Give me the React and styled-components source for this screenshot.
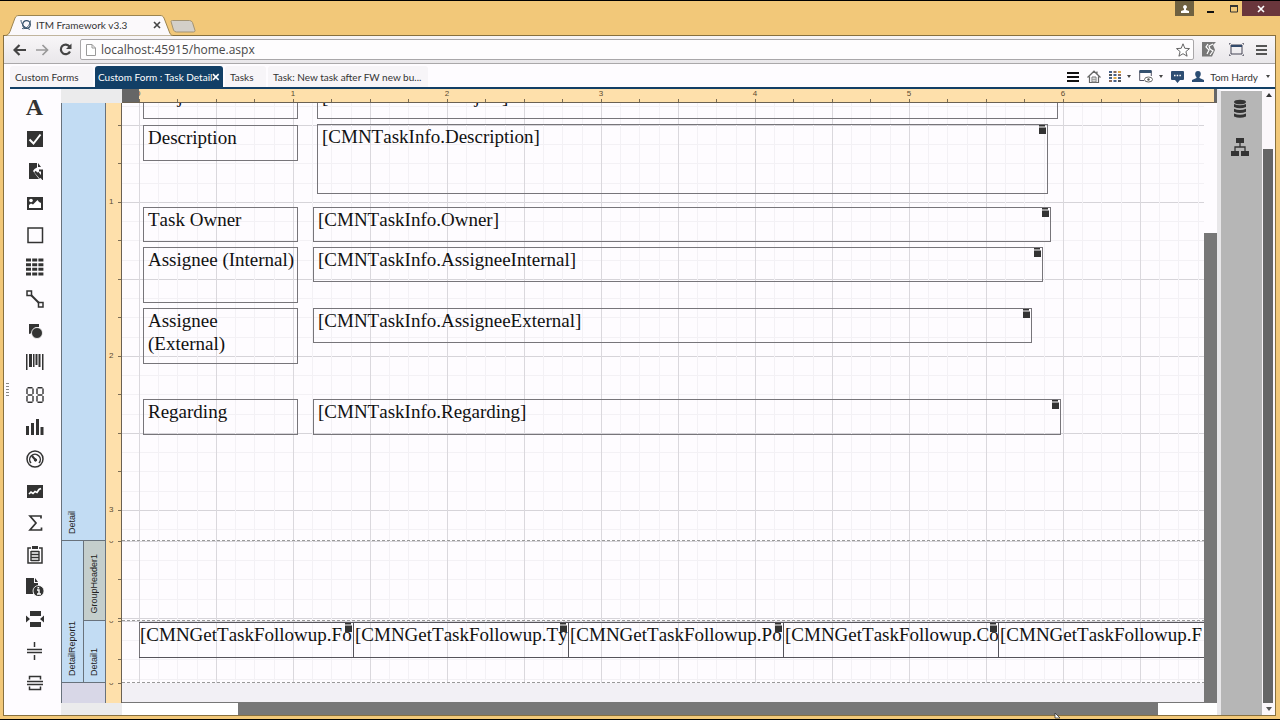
import React from 'react';
import styled, { createGlobalStyle, css } from 'styled-components';

const GlobalStyle = createGlobalStyle`
  * {
    box-sizing: border-box;
  }

  body {
    margin: 0;
    font-family: Lato, "Open Sans", sans-serif;
    color: #333;
  }

  button {
    border: 0;
    padding: 0;
    background: none;
    font: inherit;
    color: inherit;
    cursor: pointer;
  }
`;

const Desktop = styled.div`
  position: relative;
  display: flex;
  flex-direction: column;
  height: 100vh;
  min-height: 600px;
  overflow: hidden;
  background: #f2c879;
  border-top: 1px solid #000;
  border-bottom: 1px solid #000;
`;

/* ---------- browser window ---------- */

const TitleBar = styled.header`
  display: flex;
  flex: none;
  justify-content: space-between;
  height: 34px;
  padding-left: 5px;
`;

const TabStrip = styled.div`
  display: flex;
  align-items: flex-end;
`;

const BrowserTab = styled.div`
  position: relative;
  display: flex;
  align-items: center;
  width: 168px;
  height: 20px;
  padding: 0 12px 0 15px;
  gap: 4px;
  font-size: 10px;
`;

const TabShape = styled.svg`
  position: absolute;
  left: 0;
  top: 0;
`;

const TabLogo = styled.svg`
  position: relative;
  flex: none;
`;

const TabTitle = styled.span`
  position: relative;
  flex: 1;
  white-space: nowrap;
`;

const TabClose = styled.button`
  position: relative;
  display: flex;
`;

const NewTab = styled.button`
  display: flex;
  margin-left: -3px;
  margin-bottom: 2px;
`;

const WindowButtons = styled.div`
  display: flex;
  align-items: flex-start;
`;

const WindowButton = styled.button`
  display: flex;
  align-items: center;
  justify-content: center;
  width: ${(props) => props.$width}px;
  height: 15px;
  background: ${(props) => props.$bg || 'transparent'};
`;

const Page = styled.div`
  display: flex;
  flex: 1;
  flex-direction: column;
  min-height: 0;
  margin: 0 4px 3px 3px;
  border: 1px solid #87703f;
  background: #fefcff;
`;

const AddressRow = styled.div`
  display: flex;
  flex: none;
  align-items: center;
  height: 28px;
  padding: 0 8px 0 4px;
  background: linear-gradient(#f8f6f8, #e9e7ea);
  border-bottom: 1px solid #aaa8aa;
`;

const NavButton = styled.button`
  display: flex;
  justify-content: center;
  width: 23px;
`;

const AddressBox = styled.label`
  display: flex;
  flex: 1;
  align-items: center;
  height: 21px;
  margin-left: 3px;
  padding: 0 3px 0 5px;
  gap: 5px;
  background: #fefdfe;
  border: 1px solid #a9a7a9;
  border-radius: 2px;
`;

const AddressInput = styled.input`
  flex: 1;
  min-width: 0;
  border: 0;
  padding: 0;
  outline: 0;
  background: transparent;
  font-family: "Open Sans", "Noto Sans", sans-serif;
  font-size: 12px;
  color: #484848;
`;

const Extensions = styled.div`
  display: flex;
  align-items: center;
  gap: 12px;
  padding-left: 8px;
`;

/* ---------- application bar ---------- */

const AppBar = styled.div`
  display: flex;
  flex: none;
  align-items: flex-end;
  justify-content: space-between;
  height: 25px;
  margin-left: 6px;
  border-bottom: 2px solid #123f66;
`;

const AppTabs = styled.nav`
  display: flex;
  gap: 2px;
`;

const AppTab = styled.a`
  display: flex;
  align-items: center;
  width: ${(props) => props.$width}px;
  height: 21px;
  padding: 0 3px 0 5px;
  border-radius: 3px 3px 0 0;
  background: #f7f5f8;
  font-size: 10px;
  color: #333;
  text-decoration: none;
  white-space: nowrap;

  ${(props) => props.$active && css`
    justify-content: space-between;
    padding-left: 3px;
    background: #123f66;
    color: #fff;
  `}
`;

const AppTools = styled.div`
  display: flex;
  align-items: center;
  height: 21px;
  padding-right: 5px;
  gap: 8px;
  font-size: 10px;
`;

const AppTool = styled.button`
  display: flex;
  align-items: center;
  gap: 6px;
`;

const Caret = styled.span`
  border: 2px solid transparent;
  border-top: 3px solid #444;
  border-bottom: 0;
  margin-left: ${(props) => (props.$far ? 2 : 0)}px;
`;

const Workspace = styled.main`
  display: flex;
  flex: 1;
  min-height: 0;
`;

const Splitter = styled.div`
  display: flex;
  align-items: center;
  justify-content: center;
  width: 6px;
  padding-bottom: 26px;
`;

const Grip = styled.div`
  width: 3px;
  height: 13px;
  background: repeating-linear-gradient(#888 0 1px, transparent 1px 3px);
`;

const Toolbox = styled.nav`
  display: flex;
  flex-direction: column;
  width: 51px;
  padding-top: 2px;
  padding-right: 2px;
  overflow: hidden;
`;

const ToolButton = styled.button`
  display: flex;
  flex: none;
  align-items: center;
  justify-content: center;
  height: 32px;
`;

const ToolLetter = styled.span`
  font-family: "Liberation Serif", serif;
  font-size: 24px;
  font-weight: bold;
  line-height: 24px;
  color: #333;
`;

/* ---------- report designer ---------- */

const Designer = styled.section`
  display: grid;
  flex: 1;
  grid-template-columns: 45px 16px minmax(0, 1fr) 13px;
  grid-template-rows: 14px minmax(0, 1fr) 12px;
  min-width: 0;
  overflow: hidden;
`;

const Corner = styled.div`
  grid-column: 1 / 3;
  background: #ebebec;
`;

const rulerText = css`
  font-family: "Liberation Sans", sans-serif;
  font-size: 8px;
  line-height: 8px;
  color: #5a4a30;
`;

const TopRuler = styled.div`
  display: flex;
  grid-column: 3 / 5;
  overflow: hidden;
  border-bottom: 1px solid #6b6152;
  border-right: 3px solid #666;
  background:
    linear-gradient(90deg, #7a6c54 1px, transparent 1px 38px, #7a6c54 38px 39px, transparent 39px)
    17px 100% / 77px 3px repeat-x,
    #fee0ab;
`;

const RulerMargin = styled.div`
  flex: none;
  width: 17px;
  background: #666;
`;

const RulerZero = styled.div`
  ${rulerText}
  flex: none;
  width: 77px;
  padding-top: 1px;
  overflow: hidden;
  text-indent: -3px;
`;

const RulerInch = styled.div`
  ${rulerText}
  flex: none;
  width: 154px;
  padding-top: 1px;
  text-align: center;
`;

const BandTree = styled.div`
  display: flex;
  flex-direction: column;
  overflow: hidden;
  border: solid #68727c;
  border-width: 0 1px;
`;

const BandLabel = styled.div`
  display: flex;
  flex: none;
  align-items: flex-end;
  width: ${(props) => (props.$half ? '21px' : 'auto')};
  height: ${(props) => props.$height}px;
  padding: 0 0 6px 4px;
  background: ${(props) => props.$bg || '#c2dcf3'};
  border-bottom: 1px solid #68727c;
`;

const BandName = styled.span`
  writing-mode: vertical-rl;
  transform: rotate(180deg);
  font-family: "Liberation Sans", sans-serif;
  font-size: 9px;
  line-height: 12px;
  color: #222;
`;

const ReportBands = styled.div`
  display: flex;
  flex: none;
`;

const SubBands = styled.div`
  flex: 1;
  border-left: 1px solid #68727c;
`;

const BandRest = styled.div`
  flex: 1;
  background: #d8d7e7;
`;

const SideRuler = styled.div`
  display: flex;
  flex-direction: column;
  overflow: hidden;
  background: #fee0ab;
  border-right: 1px solid #6b6152;
`;

const sideTicks = 'linear-gradient(#7a6c54 1px, transparent 1px 38px, #7a6c54 38px 39px, transparent 39px)';

const SideRulerBand = styled.div`
  ${rulerText}
  flex: none;
  height: ${(props) => props.$height}px;
  padding-top: ${(props) => props.$offset || 0}px;
  overflow: hidden;
  background: ${sideTicks} 100% ${(props) => props.$offset || 0}px / 3px 77px repeat-y;
`;

const SideInch = styled.div`
  display: flex;
  align-items: center;
  height: 154px;
  padding-left: 3px;
`;

const SideZero = styled.div`
  margin-top: -4px;
  padding-left: 3px;
`;

const Canvas = styled.div`
  display: flex;
  flex-direction: column;
  overflow: hidden;
  border-bottom: 1px solid #777;
  background: #f2f0f5;
`;

const line = (dir, major, minor) => `linear-gradient(${dir},
  ${major} 1px, transparent 1px 19px,
  ${minor} 19px 20px, transparent 20px 38px,
  ${minor} 38px 39px, transparent 39px 58px,
  ${minor} 58px 59px, transparent 59px)`;

const Band = styled.div`
  position: relative;
  flex: none;
  height: ${(props) => props.$height}px;
  overflow: hidden;
  background:
    ${line('90deg', '#dad8dd', '#f3f1f5')} 17px 0 / 77px 77px,
    ${line('180deg', '#d6d4d9', '#f3f1f5')} 0 ${(props) => props.$offset || 0}px / 77px 77px,
    #fefcff;

  &::after {
    content: "";
    position: absolute;
    left: 0;
    right: 0;
    bottom: 0;
    height: 1px;
    background: repeating-linear-gradient(90deg, #999 0 3px, transparent 3px 5px);
  }
`;

const controlText = css`
  font-family: "Liberation Serif", serif;
  font-size: 19px;
  font-kerning: none;
  line-height: 23px;
  color: #111;
`;

const Control = styled.div`
  ${controlText}
  position: absolute;
  left: ${(props) => props.$x}px;
  top: ${(props) => props.$y}px;
  width: ${(props) => props.$w}px;
  height: ${(props) => props.$h}px;
  padding-left: 4px;
  overflow: hidden;
  border: 1px solid #77757a;
`;

const FollowupRow = styled.div`
  display: flex;
  margin: 1px 0 0 17px;
`;

const FollowupCell = styled.div`
  ${controlText}
  position: relative;
  flex: none;
  width: 215px;
  height: 36px;
  padding-left: 1px;
  overflow: hidden;
  border: solid #55535a;
  border-width: 1px 1px 1px 0;
  white-space: nowrap;

  &:first-child {
    box-shadow: inset 1px 0 #77757a;
  }
`;

const Badge = styled.svg`
  position: absolute;
  top: 0;
  right: 1px;
`;

const VerticalTrack = styled.div`
  display: flex;
  flex-direction: column;
  padding-top: 130px;
  background: #fefcff;
`;

const Thumb = styled.div`
  flex: 1;
  background: #777;
`;

const HorizontalTrack = styled.div`
  display: flex;
  grid-column: 3 / 5;
  padding: 0 59px 0 116px;
  background: #fff;
`;

const SidePanel = styled.aside`
  display: flex;
  flex-direction: column;
  align-items: center;
  width: 45px;
  padding-top: 8px;
  padding-right: 3px;
  gap: 18px;
  background: #b6b6b6;
  border-left: 4px solid #e8e7e9;
  border-top: 2px solid #fefcff;
`;

const PageScroll = styled.div`
  display: flex;
  flex-direction: column;
  align-items: stretch;
  width: 13px;
  background: #fbf7fa;
`;

const ScrollArrow = styled.button`
  display: flex;
  flex: none;
  align-items: center;
  justify-content: center;
  height: 12px;
`;

const PageThumb = styled.div`
  flex: 1;
  width: 10px;
  margin: 48px 0 0 1px;
  background: #666;
`;

const Pointer = styled.svg`
  position: absolute;
  right: 218px;
  bottom: 0;
`;

const INK = '#333';

const toolIcons = [
  {
    name: 'Check Box',
    art: (
      <>
        <rect x="1" y="1" width="16" height="16" fill={INK} />
        <path d="M3.5 9.5l4 4 7-9" fill="none" stroke="#fff" strokeWidth="2" />
      </>
    ),
  },
  {
    name: 'Rich Text',
    art: (
      <>
        <path d="M3 1h8v4.500L8.500 7 7 9l6 8H3z" fill={INK} />
        <path d="M12 1l3 4h-3z" fill={INK} />
        <path d="M13 8.500h3V16l-4.500-5.500M9 9.500l5.500 6.500" stroke={INK} strokeWidth="2" fill="none" />
      </>
    ),
  },
  {
    name: 'Picture Box',
    art: (
      <>
        <rect x="1" y="3" width="16" height="13" fill={INK} />
        <circle cx="5" cy="6.500" r="1.800" fill="#fff" />
        <path d="M3 14v-3l2-1.500 2 1L11.500 6 13 8l2 1v5z" fill="#fff" />
      </>
    ),
  },
  {
    name: 'Panel',
    art: <rect x="2" y="2" width="14.500" height="14.500" fill="none" stroke={INK} strokeWidth="1.500" />,
  },
  {
    name: 'Table',
    art: (
      <path
        d="M0 2h17.500M0 6.700h17.500M0 11.300h17.500M0 16h17.500"
        stroke={INK}
        strokeWidth="3"
        strokeDasharray="5 1.200"
      />
    ),
  },
  {
    name: 'Line',
    art: (
      <g fill="none" stroke={INK} strokeWidth="1.500">
        <rect x="1" y="1" width="4.500" height="4.500" />
        <rect x="12.500" y="12.500" width="4.500" height="4.500" />
        <path d="M5 5l8 8" strokeWidth="2" />
      </g>
    ),
  },
  {
    name: 'Shape',
    art: (
      <>
        <path d="M3 2h10v3a6 6 0 0 0-7 6l-3 1z" fill={INK} />
        <circle cx="11" cy="11" r="5.500" fill={INK} stroke="#fff" strokeWidth=".8" />
      </>
    ),
  },
  {
    name: 'Bar Code',
    art: (
      <g fill={INK}>
        <path d="M0 0h1.500v16H0zM3 0h3v13H3zM7 0h1.500v13H7zM9.500 0h2v11h-2zM12.500 0h2v13h-2zM16 0h1.500v16H16z" />
      </g>
    ),
  },
  {
    name: 'Zip Code',
    art: (
      <g fill="none" stroke={INK} strokeWidth="1.400">
        <path d="M1.500 1.700h5M1.500 9h5M1.500 16.300h5M1 2.500v5.500M7 2.500v5.500M1 10v5.500M7 10v5.500" />
        <path d="M11.500 1.700h5M11.500 9h5M11.500 16.300h5M11 2.500v5.500M17 2.500v5.500M11 10v5.500M17 10v5.500" />
      </g>
    ),
  },
  {
    name: 'Chart',
    art: <path d="M0 8h3v9H0zM5 5h3v12H5zM10 1h3v16h-3zM14.500 9h3v8h-3z" fill={INK} />,
  },
  {
    name: 'Gauge',
    art: (
      <g fill="none" stroke={INK}>
        <circle cx="9" cy="9" r="8" strokeWidth="1.500" />
        <path d="M5 13a5.300 5.300 0 1 1 8 0" strokeWidth="1.500" />
        <path d="M6 6l4 4.500" strokeWidth="2" />
        <circle cx="9.500" cy="10" r="1.200" fill={INK} />
      </g>
    ),
  },
  {
    name: 'Sparkline',
    art: (
      <>
        <rect x="1" y="3" width="16" height="13" fill={INK} />
        <path d="M3 12l2-2 2 1.500 2-2 2 1 2-3 2-1" fill="none" stroke="#fff" strokeWidth="1.700" />
      </>
    ),
  },
  {
    name: 'Pivot Grid',
    art: <path d="M15 4.500V2H4l6 7-6 7h11.500v-2.500" fill="none" stroke={INK} strokeWidth="1.700" />,
  },
  {
    name: 'Subreport',
    art: (
      <>
        <path d="M5 2H2v15h14V2h-3" fill="none" stroke={INK} strokeWidth="1.500" />
        <path d="M6 0h6v3H6z" fill={INK} />
        <path d="M5 5.500h8M5 8.500h8M5 11.500h8M5 14.500h8M5 5v10M13 5v10" stroke={INK} strokeWidth="1.400" />
      </>
    ),
  },
  {
    name: 'Page Info',
    art: (
      <>
        <path d="M0 0h8v5h4v3l-5 4v4H0zM9 0l3 4H9z" fill={INK} />
        <circle cx="12.500" cy="13" r="5.500" fill={INK} stroke="#fff" strokeWidth=".8" />
        <path d="M11 12h2v4M11 16h4M11.500 9.800h1.700" stroke="#fff" strokeWidth="1.400" fill="none" />
      </>
    ),
  },
  {
    name: 'Page Break',
    art: <path d="M4 1h11v5H4zM4 12h11v5H4zM0 5.500l4 3.500-4 3.500zM18 5.500l-4 3.500 4 3.500z" fill={INK} />,
  },
  {
    name: 'Cross Band Line',
    art: <path d="M1 7.500h15M1 10.500h15M8.500 0v5M8.500 13v5" stroke={INK} strokeWidth="1.500" />,
  },
  {
    name: 'Cross Band Box',
    art: (
      <path
        d="M1 7.500h16M1 10.500h16M3.500 5.500v-3h11v3M3.500 12.500v3h11v-3"
        fill="none"
        stroke={INK}
        strokeWidth="1.500"
      />
    ),
  },
];

const labels = [
  { text: 'Subject', x: 21, y: -19, w: 155, h: 35 },
  { text: 'Description', x: 21, y: 22, w: 155, h: 36 },
  { text: 'Task Owner', x: 21, y: 104, w: 155, h: 35 },
  { text: 'Assignee (Internal)', x: 21, y: 144, w: 155, h: 56 },
  { text: 'Assignee (External)', x: 21, y: 205, w: 155, h: 56 },
  { text: 'Regarding', x: 21, y: 296, w: 155, h: 36 },
];

const fields = [
  { text: '[CMNTaskInfo.Subject]', x: 195, y: -19, w: 741, h: 35 },
  { text: '[CMNTaskInfo.Description]', x: 195, y: 21, w: 731, h: 70 },
  { text: '[CMNTaskInfo.Owner]', x: 191, y: 104, w: 738, h: 35 },
  { text: '[CMNTaskInfo.AssigneeInternal]', x: 191, y: 144, w: 730, h: 35 },
  { text: '[CMNTaskInfo.AssigneeExternal]', x: 191, y: 205, w: 719, h: 35 },
  { text: '[CMNTaskInfo.Regarding]', x: 191, y: 296, w: 748, h: 36 },
];

const followups = [
  '[CMNGetTaskFollowup.Fo',
  '[CMNGetTaskFollowup.Ty',
  '[CMNGetTaskFollowup.Po',
  '[CMNGetTaskFollowup.Co',
  '[CMNGetTaskFollowup.F',
];

const DataBadge = () => (
  <Badge width="8" height="10" viewBox="0 0 8 10">
    <path d="M1 0h6v1.500H1zM1 2.500h7V9H1z" fill="#333" />
  </Badge>
);

const Cross = ({ color, size = 8 }) => (
  <svg width={size} height={size} viewBox="0 0 8 8">
    <path d="M1 1l6 6M7 1L1 7" stroke={color} strokeWidth="1.600" />
  </svg>
);

const BrowserChrome = () => (
  <TitleBar>
    <TabStrip>
      <BrowserTab>
        <TabShape width="168" height="21" viewBox="0 0 168 21">
          <path d="M0 20.500c3 0 4-2 5-4L10 3c1-2 2-2.500 4-2.500h141c2 0 3 .5 4 2.500l5 13c1 3 2 4.500 4 4.500" fill="#fbf9fb" stroke="#9b8450" />
        </TabShape>
        <TabLogo width="12" height="12" viewBox="0 0 12 12">
          <g fill="none" stroke="#35526b" strokeWidth="1.300">
            <circle cx="6.500" cy="5.500" r="3.800" />
            <path d="M1 1c0 3 2 7 9 9.500M2 9.500c4 1 8-3 8.500-8" strokeWidth=".9" />
          </g>
        </TabLogo>
        <TabTitle>ITM Framework v3.3</TabTitle>
        <TabClose aria-label="Close tab"><Cross color="#444" /></TabClose>
      </BrowserTab>
      <NewTab aria-label="New tab">
        <svg width="26" height="13" viewBox="0 0 26 13">
          <path d="M1 1.500Q1 .5 2.500.5h17q2 0 3 2l2.500 8q0 1.500-1.500 1.500h-17q-2 0-3-2z" fill="#d3cfc9" stroke="#a39372" />
        </svg>
      </NewTab>
    </TabStrip>
    <WindowButtons>
      <WindowButton $width={19} $bg="#6f6140" aria-label="Account">
        <svg width="8" height="8" viewBox="0 0 8 8">
          <path d="M4 0a2 2 0 0 1 1 3.700V5l3 1v2H0V6l3-1V3.700A2 2 0 0 1 4 0z" fill="#fff" />
        </svg>
      </WindowButton>
      <WindowButton $width={31} aria-label="Minimize">
        <svg width="8" height="8" viewBox="0 0 8 8"><path d="M1 7h7" stroke="#111" strokeWidth="2" /></svg>
      </WindowButton>
      <WindowButton $width={17} aria-label="Maximize">
        <svg width="8" height="8" viewBox="0 0 8 8">
          <path d="M.5 1h7v6h-7z" fill="none" stroke="#333" />
          <path d="M0 1h8" stroke="#333" strokeWidth="2" />
        </svg>
      </WindowButton>
      <WindowButton $width={38} $bg="#6a363c" aria-label="Close"><Cross color="#fff" /></WindowButton>
    </WindowButtons>
  </TitleBar>
);

const Address = () => (
  <AddressRow>
    <NavButton aria-label="Back">
      <svg width="13" height="12" viewBox="0 0 13 12">
        <path d="M13 6H2M6.500 1L1.500 6l5 5" fill="none" stroke="#444" strokeWidth="2.200" />
      </svg>
    </NavButton>
    <NavButton aria-label="Forward">
      <svg width="13" height="12" viewBox="0 0 13 12">
        <path d="M0 6h11M6.500 1l5 5-5 5" fill="none" stroke="#999" strokeWidth="1.700" />
      </svg>
    </NavButton>
    <NavButton aria-label="Reload">
      <svg width="13" height="13" viewBox="0 0 13 13">
        <path d="M10.500 3.500A4.800 4.800 0 1 0 11 8.500" fill="none" stroke="#444" strokeWidth="2.200" />
        <path d="M12.500.5v5.500H7z" fill="#444" />
      </svg>
    </NavButton>
    <AddressBox>
      <svg width="10" height="12" viewBox="0 0 10 12">
        <path d="M.5.500h5.500l3.500 3.500v7.500h-9zM6 .5v3.500h3.500" fill="#fff" stroke="#999" />
      </svg>
      <AddressInput aria-label="Address" defaultValue="localhost:45915/home.aspx" />
      <svg width="14" height="14" viewBox="0 0 14 14">
        <path d="M7 .8l1.800 4.500 4.700.3-3.600 3 1.200 4.600L7 10.700l-4.100 2.500 1.200-4.600-3.600-3 4.700-.3z" fill="#fff" stroke="#555" strokeWidth=".9" />
      </svg>
    </AddressBox>
    <Extensions>
      <svg width="15" height="15" viewBox="0 0 15 15">
        <path d="M0 0h14l-3 3 2 5-3 6.500H0z" fill="#777" />
        <path d="M11 2L7 4l1 3 3 2-3 4M6 2L4 5l3 3-2 4" fill="none" stroke="#fff" strokeWidth="1.200" />
      </svg>
      <svg width="15" height="13" viewBox="0 0 15 13">
        <path d="M2 2h11v9H2z" fill="none" stroke="#445" />
        <path d="M2 3h11" stroke="#334a6b" strokeWidth="2" />
        <path d="M0 2V0h2M13 0h2v2M0 11v2h2M13 13h2v-2" fill="none" stroke="#445" />
      </svg>
      <svg width="11" height="12" viewBox="0 0 11 12">
        <path d="M0 2h11M0 6h11M0 10h11" stroke="#555" strokeWidth="2.200" />
      </svg>
    </Extensions>
  </AddressRow>
);

const ApplicationBar = () => (
  <AppBar>
    <AppTabs>
      <AppTab href="#" $width={83}>Custom Forms</AppTab>
      <AppTab href="#" $width={128} $active>
        Custom Form : Task Detail
        <Cross color="#fff" />
      </AppTab>
      <AppTab href="#" $width={41}>Tasks</AppTab>
      <AppTab href="#" $width={160}>Task: New task after FW new bu...</AppTab>
    </AppTabs>
    <AppTools>
      <AppTool aria-label="Menu">
        <svg width="12" height="10" viewBox="0 0 12 10">
          <path d="M0 1h12M0 5h12M0 9h12" stroke="#111" strokeWidth="2" />
        </svg>
      </AppTool>
      <AppTool aria-label="Home">
        <svg width="14" height="13" viewBox="0 0 14 13">
          <path d="M.5 7.500L7 1.200l6.500 6.300M2.500 6.500v6h9v-6M10 1.500v2" fill="none" stroke="#666" strokeWidth="1.200" />
          <path d="M5 7h4v5H5z" fill="#fff" stroke="#777" />
          <path d="M7 7v5M5 9.500h4" stroke="#999" strokeWidth=".8" />
        </svg>
      </AppTool>
      <AppTool aria-label="Modules">
        <svg width="12" height="12" viewBox="0 0 12 12">
          <path d="M0 0h3v2H0zM0 6h3v2H0zM4.500 3h3v2h-3zM4.500 9h3v2h-3zM9 6h3v2H9z" fill="#45618a" />
          <path d="M4.500 0h3v2h-3zM9 3h3v2H9zM0 9h3v2H0z" fill="#8a6a5c" />
          <path d="M9 0h3v2H9zM4.500 6h3v2h-3z" fill="#e0a94a" />
          <path d="M0 3h3v2H0zM9 9h3v2H9z" fill="#555" />
        </svg>
        <Caret />
      </AppTool>
      <AppTool aria-label="Views">
        <svg width="14" height="13" viewBox="0 0 14 13">
          <path d="M5 10.500H.7V1h11.600v5" fill="none" stroke="#556" />
          <path d="M.5 1.500h12" stroke="#34506f" strokeWidth="3" />
          <ellipse cx="9.500" cy="9.500" rx="4" ry="2.500" fill="#fff" stroke="#666" />
          <circle cx="9.500" cy="9.500" r="1.200" fill="#555" />
        </svg>
        <Caret />
      </AppTool>
      <AppTool aria-label="Messages">
        <svg width="13" height="12" viewBox="0 0 13 12">
          <path d="M1 0h11q1 0 1 1v7q0 1-1 1H9l-2.500 3L4 9H1Q0 9 0 8V1q0-1 1-1z" fill="#2e4d73" />
          <path d="M3 4.500h7" stroke="#fff" strokeWidth="1.500" strokeDasharray="1.500 1.200" />
        </svg>
      </AppTool>
      <AppTool>
        <svg width="12" height="11" viewBox="0 0 12 11">
          <path d="M6 0c4 0 3 5 1.500 6v1L12 9v2H0V9l4.500-2V6C3 5 2 0 6 0z" fill="#2b4d74" />
        </svg>
        Tom Hardy
        <Caret $far />
      </AppTool>
    </AppTools>
  </AppBar>
);

const ReportDesigner = () => (
  <Designer>
    <Corner />
    <TopRuler>
      <RulerMargin />
      <RulerZero>0</RulerZero>
      {[1, 2, 3, 4, 5, 6].map((n) => <RulerInch key={n}>{n}</RulerInch>)}
    </TopRuler>

    <BandTree>
      <BandLabel $height={438}><BandName>Detail</BandName></BandLabel>
      <ReportBands>
        <BandLabel $half $height={142}><BandName>DetailReport1</BandName></BandLabel>
        <SubBands>
          <BandLabel $height={80} $bg="#c4cecc"><BandName>GroupHeader1</BandName></BandLabel>
          <BandLabel $height={62}><BandName>Detail1</BandName></BandLabel>
        </SubBands>
      </ReportBands>
      <BandRest />
    </BandTree>

    <SideRuler>
      <SideRulerBand $height={438} $offset={22}>
        <SideInch>1</SideInch>
        <SideInch>2</SideInch>
        <SideInch>3</SideInch>
      </SideRulerBand>
      <SideRulerBand $height={80}><SideZero>0</SideZero></SideRulerBand>
      <SideRulerBand $height={62}><SideZero>0</SideZero></SideRulerBand>
      <SideRulerBand $height={20}><SideZero>0</SideZero></SideRulerBand>
    </SideRuler>

    <Canvas>
      <Band $height={438} $offset={22}>
        {labels.map((c) => (
          <Control key={c.text} $x={c.x} $y={c.y} $w={c.w} $h={c.h}>{c.text}</Control>
        ))}
        {fields.map((c) => (
          <Control key={c.text} $x={c.x} $y={c.y} $w={c.w} $h={c.h}>
            {c.text}
            <DataBadge />
          </Control>
        ))}
      </Band>
      <Band $height={80} />
      <Band $height={62}>
        <FollowupRow>
          {followups.map((text) => (
            <FollowupCell key={text}>
              {text}
              <DataBadge />
            </FollowupCell>
          ))}
        </FollowupRow>
      </Band>
    </Canvas>
    <VerticalTrack><Thumb /></VerticalTrack>

    <Corner />
    <HorizontalTrack><Thumb /></HorizontalTrack>
  </Designer>
);

const App = () => {
  return (
    <Desktop>
      <GlobalStyle />
      <BrowserChrome />
      <Page>
        <Address />
        <ApplicationBar />
        <Workspace>
          <Splitter><Grip /></Splitter>
          <Toolbox>
            <ToolButton aria-label="Label"><ToolLetter>A</ToolLetter></ToolButton>
            {toolIcons.map((icon) => (
              <ToolButton key={icon.name} aria-label={icon.name}>
                <svg width="18" height="18" viewBox="0 0 18 18">{icon.art}</svg>
              </ToolButton>
            ))}
          </Toolbox>
          <ReportDesigner />
          <SidePanel>
            <AppTool aria-label="Data sources">
              <svg width="14" height="20" viewBox="0 0 14 20">
                <g fill="#333">
                  <ellipse cx="7" cy="3" rx="6" ry="2.300" />
                  <path d="M1 5q6 2.500 12 0v3q-6 2.500-12 0zM1 9.700q6 2.500 12 0v3q-6 2.500-12 0zM1 14.400q6 2.500 12 0v3q-6 2.500-12 0z" />
                </g>
              </svg>
            </AppTool>
            <AppTool aria-label="Report explorer">
              <svg width="18" height="20" viewBox="0 0 18 20">
                <path d="M5 1h8v5H5zM0 14h8v5H0zM10 14h8v5h-8z" fill="#333" />
                <path d="M9 6v4M4 14v-4h10v4" fill="none" stroke="#333" strokeWidth="1.300" />
              </svg>
            </AppTool>
          </SidePanel>
          <PageScroll>
            <ScrollArrow aria-label="Scroll up">
              <svg width="6" height="4" viewBox="0 0 6 4"><path d="M0 4l3-4 3 4z" fill="#333" /></svg>
            </ScrollArrow>
            <PageThumb />
            <ScrollArrow aria-label="Scroll down">
              <svg width="6" height="4" viewBox="0 0 6 4"><path d="M0 0h6L3 4z" fill="#555" /></svg>
            </ScrollArrow>
          </PageScroll>
        </Workspace>
      </Page>
      <Pointer width="8" height="6" viewBox="0 0 8 6">
        <path d="M1 0l5 5H1z" fill="#fff" stroke="#333" strokeWidth=".8" />
      </Pointer>
    </Desktop>
  );
};

export default App;
